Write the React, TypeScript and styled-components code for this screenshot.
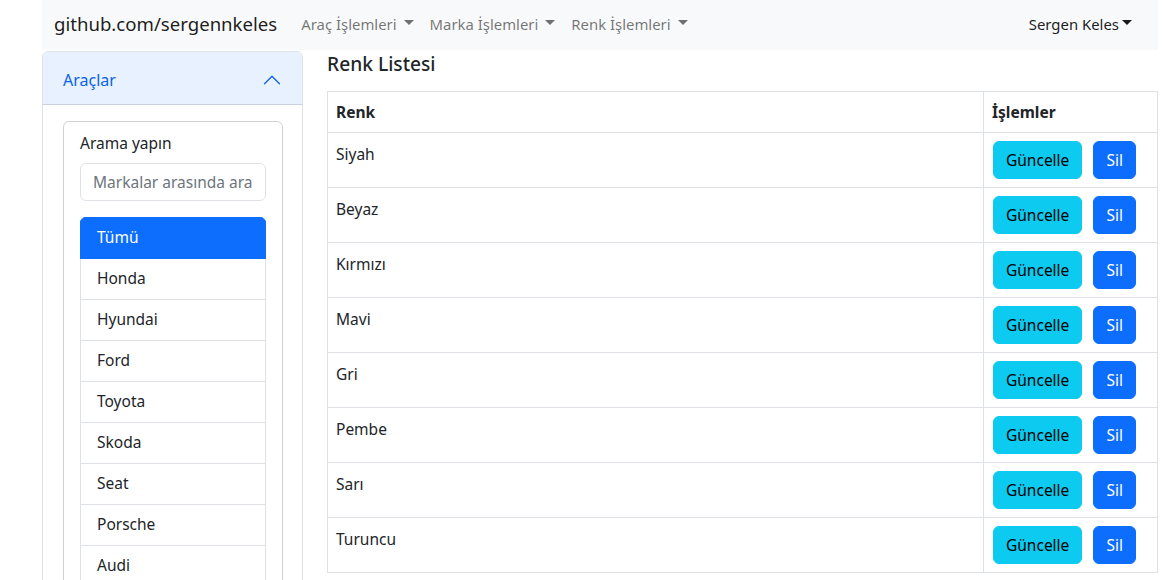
import React from "react";
import styled, { createGlobalStyle } from "styled-components";

const GlobalStyle = createGlobalStyle`
  * { box-sizing: border-box; }
  body {
    margin: 0;
    background: #fff;
    color: #212529;
    font-family: "Noto Sans", "Open Sans", sans-serif;
    font-size: 16px;
    line-height: 1.5;
  }
`;

const Page = styled.div`
  padding: 0 4px 0 42px;
`;

const Navbar = styled.nav`
  height: 50px;
  background: #f8f9fa;
  display: flex;
  align-items: center;
  justify-content: space-between;
  padding: 0 26px 0 12px;
`;

const NavLeft = styled.div`
  display: flex;
  align-items: center;
`;

const Brand = styled.a`
  font-size: 18.6px;
  color: rgba(0, 0, 0, 0.9);
  margin-right: 16px;
  text-decoration: none;
  line-height: 30px;
  transform: translateY(-1px);
`;

const NavLink = styled.a<{ $dark?: boolean }>`
  display: inline-flex;
  align-items: center;
  padding: 8px;
  font-size: 14.9px;
  color: ${(p) => (p.$dark ? "rgba(0,0,0,0.9)" : "rgba(0,0,0,0.55)")};
  text-decoration: none;
  white-space: nowrap;
  transform: translateY(-1px);
  &::after {
    content: "";
    display: inline-block;
    margin-left: ${(p) => (p.$dark ? "3px" : "7px")};
    border-top: 5px solid currentColor;
    border-left: 5px solid transparent;
    border-right: 5px solid transparent;
    transform: translateY(-1px);
  }
  ${(p) => (p.$dark ? "padding-right: 0;" : "")}
`;

const Main = styled.div`
  display: flex;
  gap: 24px;
  align-items: flex-start;
  padding-top: 1px;
`;

const Sidebar = styled.aside`
  width: 261px;
  flex: none;
  border: 1px solid #dee2e6;
  border-radius: 6px 6px 0 0;
  overflow: hidden;
`;

const AccordionHeader = styled.button`
  width: 100%;
  display: flex;
  align-items: center;
  justify-content: space-between;
  padding: 3px 20px 0 20px;
  height: 53px;
  border: 0;
  background: #e7f1ff;
  color: #0c63e4;
  font: inherit;
  font-size: 16px;
  box-shadow: inset 0 -1px 0 rgba(0, 0, 0, 0.125);
  text-align: left;
  cursor: pointer;
`;

const AccordionBody = styled.div`
  padding: 16px 19px 16px 20px;
`;

const Card = styled.div`
  border: 1px solid rgba(0, 0, 0, 0.175);
  border-radius: 6px;
  padding: 10px 16px 16px;
`;

const Label = styled.label`
  display: block;
  margin-bottom: 8px;
  font-size: 15.5px;
`;

const Input = styled.input`
  display: block;
  width: 100%;
  height: 38px;
  padding: 6px 12px;
  font: inherit;
  font-size: 15.5px;
  color: #212529;
  border: 1px solid #dee2e6;
  border-radius: 6px;
  &::placeholder { color: #6c757d; }
`;

const ListGroup = styled.ul`
  list-style: none;
  margin: 16px 0 0;
  padding: 0;
  border-radius: 6px;
  overflow: hidden;
`;

const ListItem = styled.li<{ $active?: boolean }>`
  padding: 8px 16px;
  height: ${(p) => (p.$active ? "42px" : "41px")};
  font-size: 15.5px;
  border: 1px solid ${(p) => (p.$active ? "#0d6efd" : "#dee2e6")};
  border-top-width: ${(p) => (p.$active ? "1px" : "0")};
  background: ${(p) => (p.$active ? "#0d6efd" : "#fff")};
  color: ${(p) => (p.$active ? "#fff" : "#212529")};
`;

const Content = styled.section`
  flex: 1;
  min-width: 0;
`;

const Title = styled.h5`
  margin: 0 0 15px;
  padding-top: 1px;
  font-size: 19.2px;
  font-weight: 500;
  line-height: 24px;
`;

const Table = styled.table`
  width: 100%;
  border-collapse: collapse;
  border: 1px solid #dee2e6;
  font-size: 15.5px;
`;

const Th = styled.th<{ $w?: number }>`
  text-align: left;
  font-weight: 700;
  padding: 9px 8px 7px;
  height: 41px;
  border: 1px solid #dee2e6;
  vertical-align: top;
  ${(p) => (p.$w ? `width: ${p.$w}px;` : "")}
`;

const Td = styled.td`
  padding: 8px;
  height: 55px;
  border: 1px solid #dee2e6;
  vertical-align: top;
`;

const CellText = styled.div`
  padding-top: 2px;
`;

const Actions = styled.div`
  display: flex;
  gap: 11px;
  padding-left: 1px;
`;

const Button = styled.button<{ $variant: "info" | "primary" }>`
  height: 38px;
  padding: 6px 12px;
  border: 1px solid ${(p) => (p.$variant === "info" ? "#0dcaf0" : "#0d6efd")};
  border-radius: 6px;
  background: ${(p) => (p.$variant === "info" ? "#0dcaf0" : "#0d6efd")};
  color: ${(p) => (p.$variant === "info" ? "#000" : "#fff")};
  font: inherit;
  font-size: 15.5px;
  line-height: 24px;
  cursor: pointer;
`;

const Chevron = () => (
  <svg width="20" height="20" viewBox="0 0 16 16" fill="#0c63e4" style={{ transform: "rotate(-180deg)" }}>
    <path
      fillRule="evenodd"
      d="M1.646 4.646a.5.5 0 0 1 .708 0L8 10.293l5.646-5.647a.5.5 0 0 1 .708.708l-6 6a.5.5 0 0 1-.708 0l-6-6a.5.5 0 0 1 0-.708z"
    />
  </svg>
);

const brands = ["Tümü", "Honda", "Hyundai", "Ford", "Toyota", "Skoda", "Seat", "Porsche", "Audi"];
const colors = ["Siyah", "Beyaz", "Kırmızı", "Mavi", "Gri", "Pembe", "Sarı", "Turuncu"];

export default function App() {
  return (
    <>
      <GlobalStyle />
      <Page>
        <Navbar>
          <NavLeft>
            <Brand>github.com/sergennkeles</Brand>
            <NavLink>Araç İşlemleri</NavLink>
            <NavLink>Marka İşlemleri</NavLink>
            <NavLink>Renk İşlemleri</NavLink>
          </NavLeft>
          <NavLink $dark>Sergen Keles</NavLink>
        </Navbar>
        <Main>
          <Sidebar>
            <AccordionHeader>
              <span>Araçlar</span>
              <Chevron />
            </AccordionHeader>
            <AccordionBody>
              <Card>
                <Label>Arama yapın</Label>
                <Input placeholder="Markalar arasında ara" />
                <ListGroup>
                  {brands.map((b, i) => (
                    <ListItem key={b} $active={i === 0}>
                      {b}
                    </ListItem>
                  ))}
                </ListGroup>
              </Card>
            </AccordionBody>
          </Sidebar>
          <Content>
            <Title>Renk Listesi</Title>
            <Table>
              <thead>
                <tr>
                  <Th>Renk</Th>
                  <Th $w={174}>İşlemler</Th>
                </tr>
              </thead>
              <tbody>
                {colors.map((c) => (
                  <tr key={c}>
                    <Td>
                      <CellText>{c}</CellText>
                    </Td>
                    <Td>
                      <Actions>
                        <Button $variant="info">Güncelle</Button>
                        <Button $variant="primary">Sil</Button>
                      </Actions>
                    </Td>
                  </tr>
                ))}
              </tbody>
            </Table>
          </Content>
        </Main>
      </Page>
    </>
  );
}
